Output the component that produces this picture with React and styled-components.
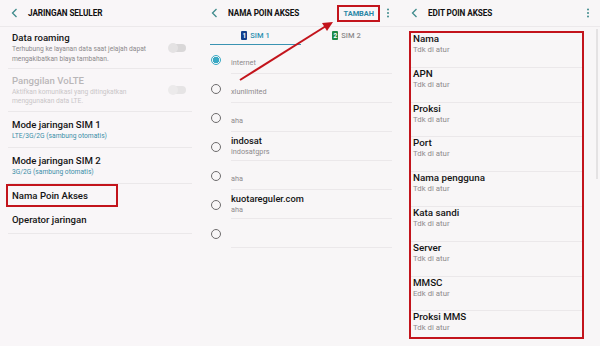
import React from "react";
import styled, { createGlobalStyle } from "styled-components";

const Global = createGlobalStyle`
  html, body { margin: 0; padding: 0; background: #f7f5f6; }
  body { font-family: Roboto, "Liberation Sans", sans-serif; }
`;

const Screen = styled.div`
  display: flex;
  width: 600px;
  height: 346px;
  overflow: hidden;
  background: #f7f5f6;
`;

const Panel = styled.div`
  position: relative;
  width: 200px;
  height: 346px;
  display: flex;
  flex-direction: column;
  background: ${(p) => p.bg || "#f8f6f7"};
`;

const Header = styled.div`
  height: 27px;
  flex: none;
  display: flex;
  align-items: center;
  padding: 0 10px 0 11px;
  border-bottom: 1px solid #ece9eb;
  box-sizing: border-box;
`;

const Back = styled.svg`
  width: 7px;
  height: 10px;
  margin-right: 10px;
  flex: none;
`;

const Title = styled.div`
  font-family: Roboto, "Liberation Sans", sans-serif;
  font-weight: 700;
  font-size: 8.2px;
  letter-spacing: -0.1px;
  color: #111;
  flex: 1;
`;

const Action = styled.div`
  font-size: 7.4px;
  font-weight: 700;
  color: #2a87a6;
  border: 2px solid #c3141c;
  padding: 2px 4px 2px;
  margin-right: 6px;
`;

const Dots = styled.svg`
  width: 4px;
  height: 10px;
  flex: none;
`;

const Row = styled.div`
  display: flex;
  align-items: center;
  height: ${(p) => p.h}px;
  margin: 0 ${(p) => (p.boxed ? 0 : 8)}px 0 ${(p) => (p.boxed ? 6 : 8)}px;
  padding-left: ${(p) => (p.boxed ? 4 : 4)}px;
  border-bottom: ${(p) => (p.line ? "1px solid #ebe8ea" : "none")};
  ${(p) => (p.boxed ? "border: 2px solid #c3141c; width: 112px; box-sizing: border-box;" : "")}
`;

const Texts = styled.div`
  flex: 1;
  display: flex;
  flex-direction: column;
`;

const Name = styled.div`
  font-size: 9.6px;
  font-weight: 500;
  color: ${(p) => (p.dim ? "#b9b6b8" : "#141414")};
  line-height: 12px;
`;

const Sub = styled.div`
  font-size: 6.7px;
  color: ${(p) => (p.accent ? "#3c8fa8" : p.dim ? "#c9c6c8" : "#8d8a8c")};
  line-height: 8.5px;
  margin-top: 1px;
`;

const Toggle = styled.div`
  position: relative;
  width: 17px;
  height: 8px;
  border-radius: 4px;
  background: ${(p) => (p.dim ? "#e6e4e5" : "#d9d7d8")};
  margin-right: 6px;
  &::after {
    content: "";
    position: absolute;
    left: -1px;
    top: -1px;
    width: 10px;
    height: 10px;
    border-radius: 50%;
    background: ${(p) => (p.dim ? "#eceaeb" : "#e4e2e3")};
  }
`;

const Tabs = styled.div`
  display: flex;
  height: 18px;
  flex: none;
  margin: 0 8px 0 10px;
`;

const Tab = styled.div`
  flex: 1;
  display: flex;
  align-items: center;
  justify-content: center;
  font-size: 7.5px;
  font-weight: 500;
  color: ${(p) => (p.active ? "#2d8fb0" : "#8c8a8b")};
  border-bottom: ${(p) => (p.active ? "1px solid #3a93b2" : "1px solid transparent")};
`;

const Badge = styled.span`
  display: inline-flex;
  align-items: center;
  justify-content: center;
  width: 6px;
  height: 9px;
  border-radius: 1px;
  background: ${(p) => p.color};
  color: #fff;
  font-size: 6.5px;
  font-weight: 700;
  margin-right: 3px;
`;

const ApnRow = styled.div`
  display: flex;
  align-items: center;
  height: 29px;
  flex: none;
`;

const Radio = styled.div`
  width: 8px;
  height: 8px;
  border-radius: 50%;
  border: 1px solid ${(p) => (p.on ? "#3aa9c4" : "#6e6c6d")};
  margin: 0 10px 0 11px;
  flex: none;
  background: ${(p) => (p.on ? "radial-gradient(circle, #3aa9c4 55%, #f8f6f7 60%)" : "transparent")};
`;

const ApnBody = styled.div`
  flex: 1;
  height: 100%;
  display: flex;
  flex-direction: column;
  justify-content: ${(p) => (p.low ? "flex-end" : "center")};
  padding-bottom: ${(p) => (p.low ? 5 : 0)}px;
  box-sizing: border-box;
  border-bottom: 1px solid #ebe8ea;
  margin-right: 8px;
`;

const ApnName = styled.div`
  font-size: 9.3px;
  font-weight: 500;
  color: #151515;
  line-height: 12px;
`;

const ApnSub = styled.div`
  font-size: ${(p) => (p.big ? 7.8 : 7.3)}px;
  color: #8e8b8d;
  line-height: 10px;
`;

const Arrow = styled.svg`
  position: absolute;
  left: 0;
  top: 0;
  pointer-events: none;
`;

const EditBox = styled.div`
  margin: 4px 16px 0 9px;
  height: 308px;
  border: 2px solid #c3141c;
  box-sizing: border-box;
  display: flex;
  flex-direction: column;
`;

const Field = styled.div`
  height: 34.8px;
  flex: none;
  display: flex;
  flex-direction: column;
  padding: 0 0 0 2px;
  box-sizing: border-box;
  border-bottom: ${(p) => (p.last ? "none" : "1px solid #ebe8ea")};
`;

const FieldName = styled(Name)`
  font-size: 9.8px;
  line-height: 12px;
  margin-top: 0;
`;

const Scroll = styled.div`
  position: absolute;
  right: 2px;
  top: 29px;
  width: 2px;
  height: 150px;
  background: #e4e2e3;
`;

const Chevron = () => (
  <Back viewBox="0 0 7 10">
    <path d="M5.5 1 L1.5 5 L5.5 9" fill="none" stroke="#3f8b8c" strokeWidth="1.3" />
  </Back>
);

const More = () => (
  <Dots viewBox="0 0 4 10">
    <circle cx="2" cy="1.5" r="1" fill="#3f8b8c" />
    <circle cx="2" cy="5" r="1" fill="#3f8b8c" />
    <circle cx="2" cy="8.5" r="1" fill="#3f8b8c" />
  </Dots>
);

const apns = [
  { sub: "internet", on: true },
  { sub: "xlunlimited" },
  { sub: "aha" },
  { name: "indosat", sub: "indosatgprs" },
  { sub: "aha" },
  { name: "kuotareguler.com", sub: "aha" },
  {},
];

const fields = [
  ["Nama", "Tdk di atur"],
  ["APN", "Tdk di atur"],
  ["Proksi", "Tdk di atur"],
  ["Port", "Tdk di atur"],
  ["Nama pengguna", "Tdk di atur"],
  ["Kata sandi", "Tdk di atur"],
  ["Server", "Tdk di atur"],
  ["MMSC", "Edk di atur"],
  ["Proksi MMS", "Tdk di atur"],
];

export default function App() {
  return (
    <>
      <Global />
      <Screen>
        <Panel bg="#f9f6f8">
          <Header>
            <Chevron />
            <Title>JARINGAN SELULER</Title>
          </Header>
          <Row h={41} line>
            <Texts>
              <Name>Data roaming</Name>
              <Sub>Terhubung ke layanan data saat jelajah dapat</Sub>
              <Sub>mengakibatkan biaya tambahan.</Sub>
            </Texts>
            <Toggle />
          </Row>
          <Row h={42} line>
            <Texts>
              <Name dim>Panggilan VoLTE</Name>
              <Sub dim>Aktifkan komunikasi yang ditingkatkan</Sub>
              <Sub dim>menggunakan data LTE.</Sub>
            </Texts>
            <Toggle dim />
          </Row>
          <Row h={35} line>
            <Texts>
              <Name>Mode jaringan SIM 1</Name>
              <Sub accent>LTE/3G/2G (sambung otomatis)</Sub>
            </Texts>
          </Row>
          <Row h={35} line>
            <Texts>
              <Name>Mode jaringan SIM 2</Name>
              <Sub accent>3G/2G (sambung otomatis)</Sub>
            </Texts>
          </Row>
          <Row h={23} boxed>
            <Name>Nama Poin Akses</Name>
          </Row>
          <Row h={26} line>
            <Name>Operator jaringan</Name>
          </Row>
        </Panel>

        <Panel>
          <Header>
            <Chevron />
            <Title>NAMA POIN AKSES</Title>
            <Action>TAMBAH</Action>
            <More />
          </Header>
          <Tabs>
            <Tab active>
              <Badge color="#123f8c">1</Badge>SIM 1
            </Tab>
            <Tab>
              <Badge color="#1f8a47">2</Badge>SIM 2
            </Tab>
          </Tabs>
          {apns.map((a, i) => (
            <ApnRow key={i}>
              <Radio on={a.on} />
              <ApnBody low={!a.name && a.sub}>
                {a.name && <ApnName>{a.name}</ApnName>}
                {a.sub && <ApnSub>{a.sub}</ApnSub>}
              </ApnBody>
            </ApnRow>
          ))}
          <Arrow width="200" height="346" viewBox="0 0 200 346">
            <line x1="40" y1="80" x2="126" y2="26" stroke="#c3141c" strokeWidth="2" />
            <polygon points="133,22 122,23 127,31" fill="#c3141c" />
          </Arrow>
        </Panel>

        <Panel>
          <Header>
            <Chevron />
            <Title>EDIT POIN AKSES</Title>
            <More />
          </Header>
          <EditBox>
            {fields.map(([n, s], i) => (
              <Field key={n} last={i === fields.length - 1}>
                <FieldName>{n}</FieldName>
                <ApnSub big>{s}</ApnSub>
              </Field>
            ))}
          </EditBox>
          <Scroll />
        </Panel>
      </Screen>
    </>
  );
}
